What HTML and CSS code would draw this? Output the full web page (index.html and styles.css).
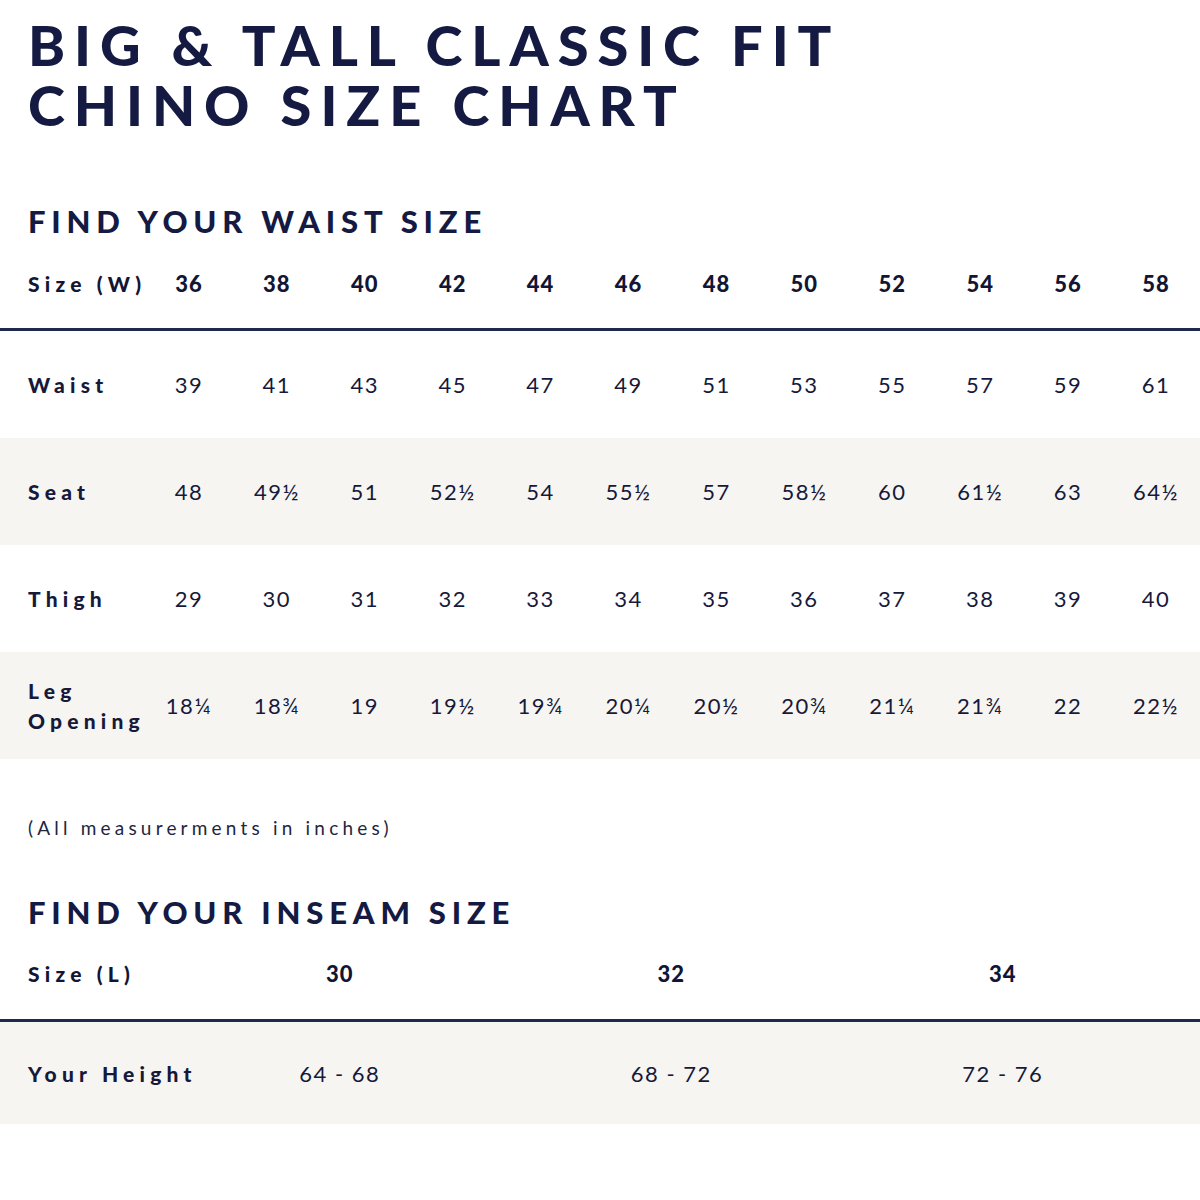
FILE: index.html
```html
<!DOCTYPE html>
<html lang="en">
<head>
<meta charset="utf-8">
<title>Big &amp; Tall Classic Fit Chino Size Chart</title>
<link rel="stylesheet" href="styles.css">
</head>
<body>
<main class="chart">
  <h1 class="title">BIG &amp; TALL CLASSIC FIT<br>CHINO SIZE CHART</h1>

  <h2 class="section">FIND YOUR WAIST SIZE</h2>
  <div class="grid waist head">
    <div class="label">Size (W)</div>
    <div>36</div><div>38</div><div>40</div><div>42</div><div>44</div><div>46</div>
    <div>48</div><div>50</div><div>52</div><div>54</div><div>56</div><div>58</div>
  </div>
  <div class="rule"></div>
  <div class="grid waist row">
    <div class="label">Waist</div>
    <div>39</div><div>41</div><div>43</div><div>45</div><div>47</div><div>49</div>
    <div>51</div><div>53</div><div>55</div><div>57</div><div>59</div><div>61</div>
  </div>
  <div class="grid waist row shade">
    <div class="label">Seat</div>
    <div>48</div><div>49½</div><div>51</div><div>52½</div><div>54</div><div>55½</div>
    <div>57</div><div>58½</div><div>60</div><div>61½</div><div>63</div><div>64½</div>
  </div>
  <div class="grid waist row">
    <div class="label">Thigh</div>
    <div>29</div><div>30</div><div>31</div><div>32</div><div>33</div><div>34</div>
    <div>35</div><div>36</div><div>37</div><div>38</div><div>39</div><div>40</div>
  </div>
  <div class="grid waist row shade">
    <div class="label two">Leg<br>Opening</div>
    <div>18¼</div><div>18¾</div><div>19</div><div>19½</div><div>19¾</div><div>20¼</div>
    <div>20½</div><div>20¾</div><div>21¼</div><div>21¾</div><div>22</div><div>22½</div>
  </div>

  <p class="note">(All measurerments in inches)</p>

  <h2 class="section section-2">FIND YOUR INSEAM SIZE</h2>
  <div class="grid inseam head">
    <div class="label">Size (L)</div>
    <div>30</div><div>32</div><div>34</div>
  </div>
  <div class="rule"></div>
  <div class="grid inseam row shade">
    <div class="label">Your Height</div>
    <div>64 - 68</div><div>68 - 72</div><div>72 - 76</div>
  </div>
</main>
</body>
</html>
```

FILE: styles.css
```css
html, body {
  margin: 0;
  padding: 0;
  background: #ffffff;
}

body {
  font-family: "Lato", "DejaVu Sans", sans-serif;
  color: #121634;
}

.chart {
  width: 1200px;
}

.title {
  margin: 0;
  padding: 15px 0 0 28px;
  font-size: 56px;
  line-height: 60px;
  font-weight: 900;
  letter-spacing: 8.9px;
  color: #141a42;
}

.section {
  margin: 0;
  padding: 66px 0 0 28px;
  font-size: 31px;
  line-height: 40px;
  font-weight: 900;
  letter-spacing: 5.8px;
  color: #141a42;
}

.section-2 {
  padding-top: 52px;
}

.grid {
  display: grid;
  align-items: center;
  text-align: center;
}

.waist {
  grid-template-columns: 145px repeat(12, 1fr);
}

.inseam {
  grid-template-columns: 174px repeat(3, 331.5px);
}

.grid .label {
  text-align: left;
  padding-left: 28px;
  font-weight: 900;
  font-size: 21px;
  letter-spacing: 5.2px;
  white-space: nowrap;
}

.head {
  font-weight: 900;
  font-size: 22px;
  letter-spacing: 1px;
  height: 64px;
  padding-top: 10px;
  padding-bottom: 13px;
}

.inseam.head {
  padding-top: 9px;
  padding-bottom: 14px;
}

.rule {
  height: 3px;
  background: #1d2a4c;
}

.row {
  height: 107px;
  font-size: 22px;
  letter-spacing: 1.5px;
  font-weight: 400;
  color: #16193a;
}

.row.shade {
  background: #f7f5f2;
}

.label.two {
  line-height: 30px;
  white-space: normal;
}

.inseam.row {
  height: 102px;
}

.note {
  margin: 0;
  padding: 57px 0 0 28px;
  font-size: 19px;
  line-height: 24px;
  letter-spacing: 4.2px;
  color: #22253f;
}
```
